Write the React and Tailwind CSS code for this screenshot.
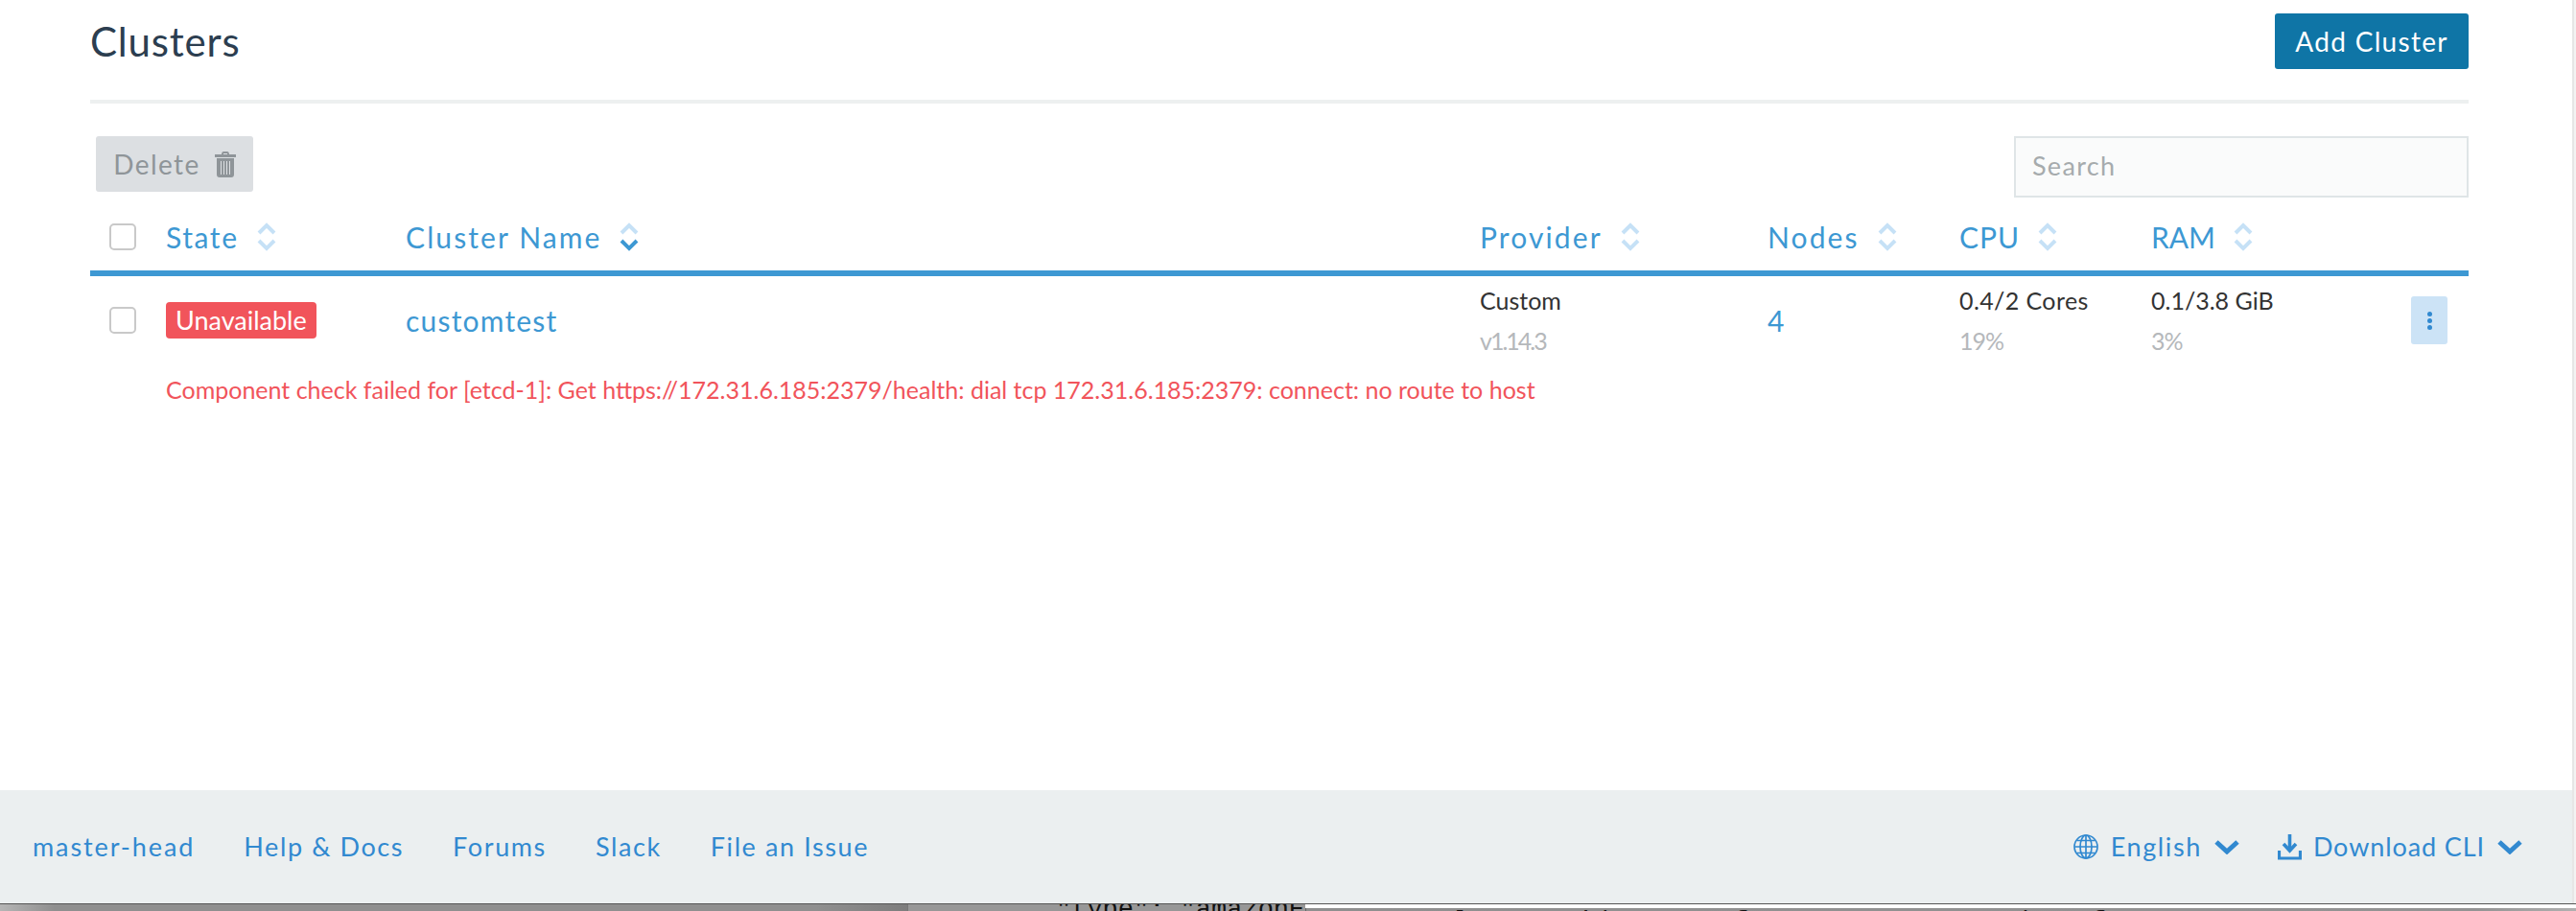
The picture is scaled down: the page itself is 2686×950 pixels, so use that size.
import React from 'react';

function SortIcon({ active }) {
  return (
    <svg width="20" height="30" viewBox="0 0 20 30" fill="none" strokeWidth="4" className="ml-[19px] shrink-0">
      <path d="M2 11 L10 3 L18 11" stroke="#c6e1f6" />
      <path d="M2 19 L10 27 L18 19" stroke={active ? '#3d98d3' : '#c6e1f6'} />
    </svg>
  );
}

function Checkbox() {
  return <div className="w-[28px] h-[28px] ml-[20px] rounded-[5px] border-2 border-[#c9c9c9] bg-white" />;
}

function HeaderCell({ label, active, className = 'tracking-[2.1px]' }) {
  return (
    <div className={`flex items-center text-[30px] text-[#3d98d3] ${className}`}>
      {label}
      <SortIcon active={active} />
    </div>
  );
}

function Chevron() {
  return (
    <svg width="26" height="16" viewBox="0 0 26 16" fill="none" stroke="currentColor" strokeWidth="5" className="shrink-0">
      <path d="M2 3 L13 13 L24 3" />
    </svg>
  );
}

function TrashIcon() {
  return (
    <svg width="22" height="27" viewBox="0 0 22 27" fill="#8f9599" className="ml-[15px]">
      <path d="M7 3 C7 1 8 0 9 0 H13 C14 0 15 1 15 3 H22 V6 H0 V3 Z M9 3 H13 V2 H9 Z" fillRule="evenodd" />
      <path d="M2 7 H20 V24 C20 26 19 27 17 27 H5 C3 27 2 26 2 24 Z M6 10 V24 H7 V10 Z M9 10 V24 H10 V10 Z M12 10 V24 H13 V10 Z M15 10 V24 H16 V10 Z" fillRule="evenodd" />
    </svg>
  );
}

function GlobeIcon() {
  return (
    <svg width="26" height="26" viewBox="0 0 26 26" fill="none" stroke="currentColor" strokeWidth="1.7" className="shrink-0">
      <circle cx="13" cy="13" r="12" />
      <ellipse cx="13" cy="13" rx="6" ry="12" />
      <path d="M13 1 V25 M1.5 13 H24.5 M3.5 6.5 H22.5 M3.5 19.5 H22.5" />
    </svg>
  );
}

function DownloadIcon() {
  return (
    <svg width="25" height="27" viewBox="0 0 25 27" fill="none" stroke="currentColor" className="shrink-0">
      <path d="M12.5 0 V16" strokeWidth="3.6" />
      <path d="M6 10 L12.5 17 L19 10" strokeWidth="3.6" />
      <path d="M1.5 17 V25 H23.5 V17" strokeWidth="3.2" />
    </svg>
  );
}

function Footer() {
  return (
    <div className="h-[118px] shrink-0 bg-[#ebeff0] flex items-center justify-between pl-[34px] pr-[52px] text-[27px] text-[#3189d0] tracking-[1.6px]">
      <div className="flex gap-[51px]">
        <span className="tracking-[1.9px]">master-head</span>
        <span>Help &amp; Docs</span>
        <span>Forums</span>
        <span>Slack</span>
        <span>File an Issue</span>
      </div>
      <div className="flex items-center">
        <GlobeIcon />
        <span className="ml-[13px] mr-[13px]">English</span>
        <Chevron />
        <div className="w-[40px]" />
        <DownloadIcon />
        <span className="ml-[12px] mr-[13px] tracking-[0.9px]">Download CLI</span>
        <Chevron />
      </div>
    </div>
  );
}

export default function App() {
  return (
    <div className="w-[2686px] h-[950px] flex flex-col overflow-hidden bg-white font-[Lato,sans-serif]">
      <div className="flex-1 flex min-h-0">
        <div className="flex-1 flex flex-col min-w-0">
          <div className="flex-1 min-h-0 pl-[94px] pr-[108px] pt-[14px]">
            <div className="flex items-center justify-between h-[58px]">
              <h1 className="text-[42px] text-[#2c3e50] font-normal tracking-[0.8px]">Clusters</h1>
              <button className="w-[202px] h-[58px] rounded-[3px] bg-[#0f75a6] text-white text-[28px] tracking-[1.3px]">Add Cluster</button>
            </div>
            <div className="h-[4px] mt-[32px] bg-[#edf0f0]" />

            <div className="flex justify-between mt-[34px] h-[64px]">
              <button className="ml-[6px] w-[164px] h-[58px] rounded-[3px] bg-[#dcdfe2] text-[#8f9599] text-[28px] tracking-[1.4px] flex items-center justify-center">
                Delete
                <TrashIcon />
              </button>
              <div className="w-[474px] h-[64px] border-2 border-[#dfe5e7] bg-[#fafbfb] pl-[17px] pb-[2px] flex items-center text-[27px] tracking-[1.3px] text-[#a6abad]">Search</div>
            </div>

            <div className="grid grid-cols-[79px_250px_1120px_300px_200px_200px_331px] items-center h-[82px] pt-[6px] border-b-[6px] border-[#3d98d3]">
              <Checkbox />
              <HeaderCell label="State" className="tracking-[1.6px]" />
              <HeaderCell label="Cluster Name" active />
              <HeaderCell label="Provider" />
              <HeaderCell label="Nodes" />
              <HeaderCell label="CPU" className="tracking-[1px]" />
              <HeaderCell label="RAM" className="tracking-[0px]" />
            </div>

            <div className="grid grid-cols-[79px_250px_1120px_300px_200px_200px_331px] items-center h-[92px]">
              <Checkbox />
              <div>
                <span className="inline-block h-[38px] px-[10px] rounded-[4px] bg-[#f1545b] text-white text-[27px] leading-[38px]">Unavailable</span>
              </div>
              <div className="text-[30px] text-[#3d98d3] tracking-[1.2px]">customtest</div>
              <div>
                <div className="text-[25px] leading-[42px] text-[#333]">Custom</div>
                <div className="text-[25px] leading-[42px] text-[#b5b8bb] tracking-[-2px]">v1.14.3</div>
              </div>
              <div className="text-[30px] text-[#3d98d3]">4</div>
              <div>
                <div className="text-[25px] leading-[42px] text-[#333] tracking-[0.4px]">0.4/2 Cores</div>
                <div className="text-[25px] leading-[42px] text-[#b5b8bb] tracking-[-1px]">19%</div>
              </div>
              <div className="flex items-center justify-between pr-[22px]">
                <div>
                  <div className="text-[25px] leading-[42px] text-[#333]">0.1/3.8 GiB</div>
                  <div className="text-[25px] leading-[42px] text-[#b5b8bb] tracking-[-1px]">3%</div>
                </div>
                <div className="w-[38px] h-[50px] rounded-[3px] bg-[#cce3f6] flex flex-col items-center justify-center gap-[2px]">
                  <span className="w-[5px] h-[5px] rounded-full bg-[#3189d0]" />
                  <span className="w-[5px] h-[5px] rounded-full bg-[#3189d0]" />
                  <span className="w-[5px] h-[5px] rounded-full bg-[#3189d0]" />
                </div>
              </div>
            </div>

            <div className="pl-[79px] text-[25px] leading-[52px] text-[#f1545b]">
              Component check failed for [etcd-1]: Get https://172.31.6.185:2379/health: dial tcp 172.31.6.185:2379: connect: no route to host
            </div>
          </div>
          <Footer />
        </div>
        <div className="w-[4px] shrink-0 flex">
          <div className="w-[2px] bg-[#e6e6e6]" />
          <div className="w-[2px] bg-[#f3f3f3]" />
        </div>
      </div>

      {/* window behind the page, only a sliver shows */}
      <div className="h-[8px] shrink-0 flex border-t border-[#555] overflow-hidden font-['Liberation_Mono',monospace] text-[27px] leading-[30px] text-[#111] whitespace-pre">
        <div className="w-[946px] bg-[linear-gradient(90deg,#b5b5b5,#8f8f8f_6%,#8f8f8f_90%,#7d7d7d)]" />
        <div className="w-[415px] bg-[#979797] border-l border-[#777] pl-[154px] -mt-[9px]">{'"type": "amazonE'}</div>
        <div className="flex-1 bg-[linear-gradient(90deg,#8f8f8f,#939393_92%,#b0b0b0)] border-l border-[#666] pl-[40px] mt-[4px]">{'  ec2 cluster  id: 11 818f7  887 4035 8847 /8618f23'}</div>
      </div>
    </div>
  );
}
